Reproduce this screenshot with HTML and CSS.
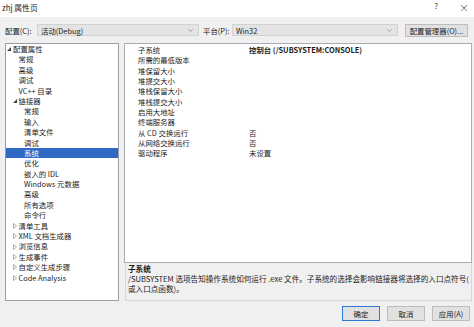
FILE: index.html
```html
<!DOCTYPE html>
<html lang="zh-CN">
<head>
  <meta charset="UTF-8">
  <meta name="viewport" content="width=device-width, initial-scale=1.0">
  <title>zhj 属性页</title>
  <link rel="stylesheet" href="styles.css">
</head>
<body>
  <div class="dialog">
    <div class="titlebar">
      <span class="title">zhj 属性页</span>
      <span class="caption">
        <span class="help">?</span>
        <span class="close">×</span>
      </span>
    </div>

    <div class="toolbar">
      <span class="label label-config">配置(C):</span>
      <div class="combo combo-config">
        <span>活动(Debug)</span>
        <svg width="5" height="3" viewBox="0 0 5 3"><path d="M0.3 0.3L2.5 2.5L4.7 0.3" fill="none" stroke="#8a8a8a" stroke-width="0.8"/></svg>
      </div>
      <span class="label label-platform">平台(P):</span>
      <div class="combo combo-platform">
        <span>Win32</span>
        <svg width="5" height="3" viewBox="0 0 5 3"><path d="M0.3 0.3L2.5 2.5L4.7 0.3" fill="none" stroke="#8a8a8a" stroke-width="0.8"/></svg>
      </div>
      <button class="btn btn-manager">配置管理器(O)...</button>
    </div>

    <div class="main">
      <div class="tree">
        <div class="node lv0"><span class="twisty"><svg width="4" height="4" viewBox="0 0 4 4"><path d="M4 0V4H0Z" fill="#444"/></svg></span>配置属性</div>
        <div class="node lv1"><span class="twisty"></span>常规</div>
        <div class="node lv1"><span class="twisty"></span>高级</div>
        <div class="node lv1"><span class="twisty"></span>调试</div>
        <div class="node lv1"><span class="twisty"></span>VC++ 目录</div>
        <div class="node lv1"><span class="twisty"><svg width="4" height="4" viewBox="0 0 4 4"><path d="M4 0V4H0Z" fill="#444"/></svg></span>链接器</div>
        <div class="node lv2"><span class="twisty"></span>常规</div>
        <div class="node lv2"><span class="twisty"></span>输入</div>
        <div class="node lv2"><span class="twisty"></span>清单文件</div>
        <div class="node lv2"><span class="twisty"></span>调试</div>
        <div class="node lv2 selected"><span class="twisty"></span>系统</div>
        <div class="node lv2"><span class="twisty"></span>优化</div>
        <div class="node lv2"><span class="twisty"></span>嵌入的 IDL</div>
        <div class="node lv2"><span class="twisty"></span>Windows 元数据</div>
        <div class="node lv2"><span class="twisty"></span>高级</div>
        <div class="node lv2"><span class="twisty"></span>所有选项</div>
        <div class="node lv2"><span class="twisty"></span>命令行</div>
        <div class="node lv1"><span class="twisty"><svg width="4" height="6" viewBox="0 0 4 6"><path d="M0.5 0.5L3.5 3L0.5 5.5Z" fill="none" stroke="#8c8c8c" stroke-width="0.7"/></svg></span>清单工具</div>
        <div class="node lv1"><span class="twisty"><svg width="4" height="6" viewBox="0 0 4 6"><path d="M0.5 0.5L3.5 3L0.5 5.5Z" fill="none" stroke="#8c8c8c" stroke-width="0.7"/></svg></span>XML 文档生成器</div>
        <div class="node lv1"><span class="twisty"><svg width="4" height="6" viewBox="0 0 4 6"><path d="M0.5 0.5L3.5 3L0.5 5.5Z" fill="none" stroke="#8c8c8c" stroke-width="0.7"/></svg></span>浏览信息</div>
        <div class="node lv1"><span class="twisty"><svg width="4" height="6" viewBox="0 0 4 6"><path d="M0.5 0.5L3.5 3L0.5 5.5Z" fill="none" stroke="#8c8c8c" stroke-width="0.7"/></svg></span>生成事件</div>
        <div class="node lv1"><span class="twisty"><svg width="4" height="6" viewBox="0 0 4 6"><path d="M0.5 0.5L3.5 3L0.5 5.5Z" fill="none" stroke="#8c8c8c" stroke-width="0.7"/></svg></span>自定义生成步骤</div>
        <div class="node lv1"><span class="twisty"><svg width="4" height="6" viewBox="0 0 4 6"><path d="M0.5 0.5L3.5 3L0.5 5.5Z" fill="none" stroke="#8c8c8c" stroke-width="0.7"/></svg></span>Code Analysis</div>
      </div>

      <div class="right">
        <div class="grid">
          <div class="row"><span class="name">子系统</span><span class="value bold">控制台 (/SUBSYSTEM:CONSOLE)</span></div>
          <div class="row"><span class="name">所需的最低版本</span><span class="value"></span></div>
          <div class="row"><span class="name">堆保留大小</span><span class="value"></span></div>
          <div class="row"><span class="name">堆提交大小</span><span class="value"></span></div>
          <div class="row"><span class="name">堆栈保留大小</span><span class="value"></span></div>
          <div class="row"><span class="name">堆栈提交大小</span><span class="value"></span></div>
          <div class="row"><span class="name">启用大地址</span><span class="value"></span></div>
          <div class="row"><span class="name">终端服务器</span><span class="value"></span></div>
          <div class="row"><span class="name">从 CD 交换运行</span><span class="value">否</span></div>
          <div class="row"><span class="name">从网络交换运行</span><span class="value">否</span></div>
          <div class="row"><span class="name">驱动程序</span><span class="value">未设置</span></div>
        </div>
        <div class="desc">
          <div class="desc-title">子系统</div>
          <div class="desc-text">/SUBSYSTEM 选项告知操作系统如何运行 .exe 文件。子系统的选择会影响链接器将选择的入口点符号(<br>或入口点函数)。</div>
        </div>
      </div>
    </div>

    <div class="footer">
      <button class="btn btn-ok">确定</button>
      <button class="btn">取消</button>
      <button class="btn">应用(A)</button>
    </div>
  </div>
</body>
</html>
```

FILE: styles.css
```css
body {
  margin: 0;
  padding: 0;
  font-family: "Noto Sans CJK SC", "Noto Sans", sans-serif;
  font-size: 7.4px;
  color: #1b1b1b;
  background-color: #f0f0f0;
}
.dialog {
  width: 474px;
  height: 327px;
  overflow: hidden;
}
.titlebar {
  height: 17px;
  display: flex;
  align-items: center;
  justify-content: space-between;
  padding: 0 5px 2px 2px;
  box-sizing: border-box;
  background: #fff;
}
.title {
  font-size: 7.8px;
}
.caption {
  display: flex;
  gap: 21px;
  color: #333;
}
.help {
  font-size: 7.8px;
}
.close {
  font-size: 10px;
  font-weight: 300;
}
.toolbar {
  display: flex;
  align-items: center;
  height: 12px;
  margin-top: 7px;
  padding-left: 5px;
}
.label {
  display: inline-block;
}
.label-config {
  width: 32px;
}
.label-platform {
  width: 29px;
  margin-left: 4px;
}
.combo {
  height: 12px;
  box-sizing: border-box;
  display: flex;
  align-items: center;
  justify-content: space-between;
  padding: 0 5px 0 3px;
  background: #e4e4e4;
  border: 1px solid #d2d2d2;
}
.combo-config {
  width: 162px;
}
.combo-platform {
  width: 166px;
}
.btn {
  font-family: inherit;
  font-size: 7.4px;
  color: #1b1b1b;
  height: 15px;
  padding: 0;
  background: #e1e1e1;
  border: 1px solid #bdbdbd;
  border-radius: 0;
}
.btn-manager {
  width: 63px;
  height: 13px;
  margin-left: 7px;
}
.main {
  display: flex;
  height: 258px;
  margin-top: 7px;
  padding: 0 2px 0 5px;
}
.tree {
  width: 114px;
  box-sizing: border-box;
  background: #fff;
  border: 1px solid #9a9da3;
}
.node {
  height: 10.4px;
  line-height: 10.4px;
  white-space: nowrap;
  display: flex;
  align-items: center;
}
.twisty {
  display: inline-flex;
  align-items: center;
  width: 6px;
  height: 10.4px;
}
.lv0 {
  padding-left: 1px;
}
.lv1 {
  padding-left: 6.5px;
}
.lv2 {
  padding-left: 12px;
}
.selected {
  background: #3069c3;
  color: #fff;
}
.right {
  width: 348px;
  margin-left: 5px;
  display: flex;
  flex-direction: column;
}
.grid {
  height: 220px;
  box-sizing: border-box;
  padding-top: 1px;
  background: #fff;
  border: 1px solid #aaadb2;
}
.row {
  display: flex;
  height: 10.35px;
  line-height: 10.35px;
  white-space: nowrap;
}
.name {
  width: 111px;
  padding-left: 13px;
}
.bold {
  font-weight: bold;
}
.desc {
  height: 38px;
  box-sizing: border-box;
  padding: 1px 0 0 2px;
  margin-left: 1px;
  border: 1px solid #d7d7d7;
  border-top: none;
  font-size: 7.6px;
  line-height: 10px;
  white-space: nowrap;
}
.desc-title {
  font-weight: bold;
}
.footer {
  display: flex;
  justify-content: flex-end;
  gap: 7px;
  margin-top: 5px;
  padding-right: 4px;
}
.footer .btn {
  width: 38px;
}
.btn-ok {
  border-color: #2b7bd6;
}
```
